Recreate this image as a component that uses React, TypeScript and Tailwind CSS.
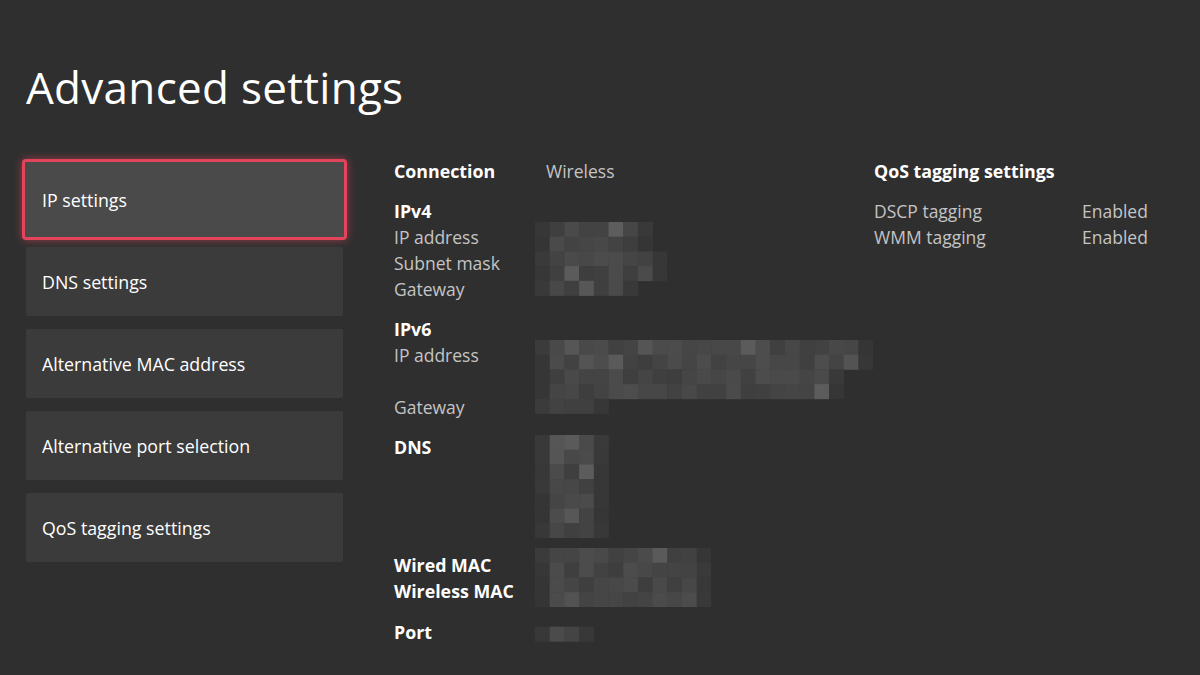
import React from "react";

const CELL = 14.7;

// fake pixelated blur for hidden values
function Mosaic({ rows, seed, className }: { rows: number[]; seed: number; className?: string }) {
  const cols = Math.max(...rows);
  let s = seed;
  const rnd = () => {
    s = (s * 9301 + 49297) % 233280;
    return s / 233280;
  };
  const cells: React.ReactNode[] = [];
  rows.forEach((w, r) => {
    for (let c = 0; c < w; c++) {
      const edge = c === 0 || c === w - 1;
      let v = 62 + Math.floor(rnd() * 16);
      if (rnd() > 0.88) v += 18;
      if (edge) v = 53 + Math.floor(rnd() * 7);
      cells.push(
        <rect
          key={`${r}-${c}`}
          x={c * CELL}
          y={r * CELL}
          width={CELL + 0.4}
          height={CELL + 0.4}
          fill={`rgb(${v},${v},${v})`}
        />
      );
    }
  });
  return (
    <svg
      className={className}
      width={cols * CELL}
      height={rows.length * CELL}
      viewBox={`0 0 ${cols * CELL} ${rows.length * CELL}`}
    >
      {cells}
    </svg>
  );
}

const menu = [
  "IP settings",
  "DNS settings",
  "Alternative MAC address",
  "Alternative port selection",
  "QoS tagging settings",
];

function Label({ children, bold }: { children: React.ReactNode; bold?: boolean }) {
  return (
    <div
      className={
        bold
          ? "h-[26px] whitespace-nowrap text-[17.8px] leading-[26px] font-bold text-white"
          : "h-[26px] whitespace-nowrap leading-[26px] text-[#c4c4c4]"
      }
    >
      {children}
    </div>
  );
}

export default function App() {
  return (
    <div
      className="h-[675px] w-[1200px] overflow-hidden bg-[#2f2f2f] text-white"
      style={{ fontFamily: '"Open Sans", "Noto Sans", sans-serif' }}
    >
      <h1 className="pl-[26px] pt-[58px] text-[44px] leading-[58px] font-normal tracking-[0.3px] text-white">
        Advanced settings
      </h1>

      <div className="mt-[49px] flex pl-[26px]">
        {/* left menu */}
        <div className="flex w-[317px] flex-col gap-[13px]">
          {menu.map((m, i) => (
            <div key={m} className="relative h-[69px]">
              {i === 0 ? (
                <div className="absolute -inset-x-[4px] -inset-y-[6px] flex items-center rounded-[4px] border-[3px] border-[#e2445c] bg-[#4a4a4a] pl-[17px] pt-[1px] text-[17.8px] text-white shadow-[0_0_8px_rgba(226,68,92,0.6)]">
                  {m}
                </div>
              ) : (
                <div className="flex h-full items-center rounded-[2px] bg-[#3b3b3b] pl-[16px] pt-[1px] text-[17.8px] text-white">
                  {m}
                </div>
              )}
            </div>
          ))}
        </div>

        {/* details */}
        <div className="ml-[51px] -mt-[7px] flex text-[17.5px]">
          <div className="flex w-[480px] flex-col">
            <div className="flex">
              <div className="w-[152px]">
                <Label bold>Connection</Label>
              </div>
              <div className="h-[26px] leading-[26px] text-[#c4c4c4]">Wireless</div>
            </div>

            <div className="mt-[14px] flex">
              <div className="w-[141px]">
                <Label bold>IPv4</Label>
                <Label>IP address</Label>
                <Label>Subnet mask</Label>
                <Label>Gateway</Label>
              </div>
              <div>
                <Mosaic className="mt-[24px]" rows={[8, 8, 9, 9, 7]} seed={11} />
              </div>
            </div>

            <div className="mt-[14px] flex">
              <div className="w-[141px]">
                <Label bold>IPv6</Label>
                <Label>IP address</Label>
                <div className="h-[26px]" />
                <Label>Gateway</Label>
              </div>
              <div>
                <Mosaic className="mt-[24px]" rows={[23, 23, 21, 21, 5]} seed={37} />
              </div>
            </div>

            <div className="mt-[14px] flex h-[104px]">
              <div className="w-[141px]">
                <Label bold>DNS</Label>
              </div>
              <div>
                <Mosaic className="mt-[1px]" rows={[5, 5, 5, 5, 5, 5, 5]} seed={73} />
              </div>
            </div>

            <div className="mt-[14px] flex">
              <div className="w-[141px]">
                <Label bold>Wired MAC</Label>
                <Label bold>Wireless MAC</Label>
              </div>
              <div>
                <Mosaic className="-mt-[4px]" rows={[12, 12, 12, 12]} seed={101} />
              </div>
            </div>

            <div className="mt-[12px] flex">
              <div className="w-[141px]">
                <Label bold>Port</Label>
              </div>
              <div>
                <Mosaic className="mt-[4px] h-[22px]" rows={[4]} seed={5} />
              </div>
            </div>
          </div>

          <div className="flex flex-col">
            <Label bold>QoS tagging settings</Label>
            <div className="mt-[14px] flex">
              <div className="w-[208px]">
                <Label>DSCP tagging</Label>
                <Label>WMM tagging</Label>
              </div>
              <div>
                <Label>Enabled</Label>
                <Label>Enabled</Label>
              </div>
            </div>
          </div>
        </div>
      </div>
    </div>
  );
}
